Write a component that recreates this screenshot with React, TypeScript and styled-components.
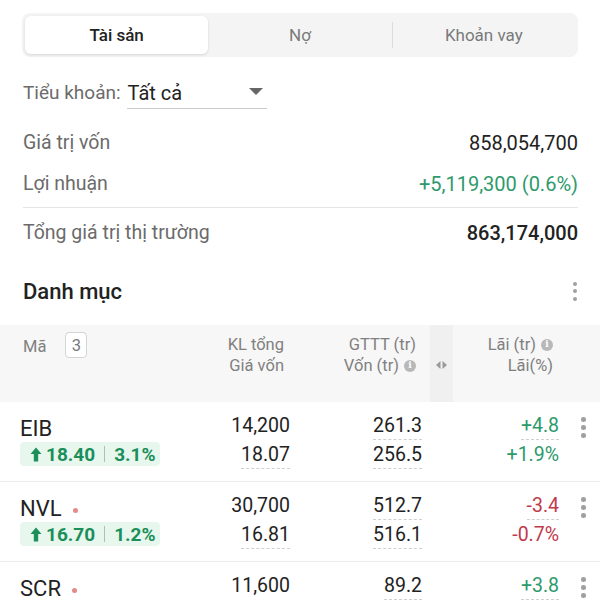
import React from "react";
import styled, { createGlobalStyle } from "styled-components";

const GlobalStyle = createGlobalStyle`
	html, body {
		margin: 0;
		padding: 0;
		background: #ffffff;
	}
	body {
		font-family: Roboto, "Noto Sans", sans-serif;
		color: #222222;
	}
`;

const Page = styled.div`
	width: 600px;
	height: 600px;
	overflow: hidden;
	background: #ffffff;
`;

const Tabs = styled.div`
	margin: 13px 22px 0 22px;
	height: 44px;
	background: #f4f4f4;
	border-radius: 8px;
	padding: 3px;
	box-sizing: border-box;
	display: grid;
	grid-template-columns: 1fr 1fr 1fr;
	align-items: center;
`;

const Tab = styled.div<{ $active?: boolean; $divider?: boolean }>`
	display: flex;
	align-items: center;
	justify-content: center;
	font-size: 17px;
	font-weight: ${(p) => (p.$active ? 500 : 400)};
	color: ${(p) => (p.$active ? "#222222" : "#7a7a7a")};
	background: ${(p) => (p.$active ? "#ffffff" : "transparent")};
	box-shadow: ${(p) => (p.$active ? "0 1px 3px rgba(0,0,0,0.12)" : "none")};
	border-left: ${(p) => (p.$divider ? "1px solid #dddddd" : "none")};
	border-radius: ${(p) => (p.$divider ? "0" : "6px")};
	height: ${(p) => (p.$divider ? "26px" : "38px")};
`;

const SubAccount = styled.div`
	display: flex;
	align-items: center;
	padding: 0 23px;
	margin-top: 18px;
	height: 34px;
`;

const SubLabel = styled.span`
	font-size: 19px;
	color: #6b6b6b;
	margin-right: 6px;
`;

const Select = styled.div`
	width: 140px;
	height: 34px;
	display: flex;
	align-items: center;
	justify-content: space-between;
	border-bottom: 1px solid #cccccc;
	box-sizing: border-box;
	padding: 3px 4px 0 1px;
	font-size: 20px;
	color: #222222;
`;

const Caret = styled.span`
	width: 0;
	height: 0;
	border-left: 7px solid transparent;
	border-right: 7px solid transparent;
	border-top: 7px solid #666666;
	margin-bottom: 3px;
`;

const Summary = styled.div`
	padding: 0 22px 0 23px;
	margin-top: 13px;
`;

const SummaryRow = styled.div<{ $border?: boolean }>`
	display: flex;
	justify-content: space-between;
	align-items: center;
	height: ${(p) => (p.$border ? "50px" : "41px")};
	margin-top: ${(p) => (p.$border ? "3px" : "0")};
	border-top: ${(p) => (p.$border ? "1px solid #e6e6e6" : "none")};
	box-sizing: border-box;
	font-size: 19.5px;
`;

const SummaryLabel = styled.span`
	color: #6b6b6b;
`;

const SummaryValue = styled.span<{ $tone?: "up" | "strong" }>`
	font-size: 20px;
	color: ${(p) => (p.$tone === "up" ? "#2e9a6c" : "#222222")};
	font-weight: ${(p) => (p.$tone === "strong" ? 500 : 400)};
`;

const SectionHead = styled.div`
	display: flex;
	justify-content: space-between;
	align-items: center;
	padding: 0 23px 0 23px;
	margin-top: 19px;
	height: 30px;
`;

const SectionTitle = styled.h2`
	margin: 0;
	font-size: 22px;
	font-weight: 500;
	color: #222222;
`;

const Kebab = styled.span<{ $size?: number }>`
	display: inline-flex;
	flex-direction: column;
	align-items: center;
	gap: 3.5px;
	& > i {
		display: block;
		width: ${(p) => p.$size ?? 4.5}px;
		height: ${(p) => p.$size ?? 4.5}px;
		border-radius: 50%;
		background: #a0a0a0;
	}
`;

const Dots = ({ size }: { size?: number }) => (
	<Kebab $size={size}>
		<i />
		<i />
		<i />
	</Kebab>
);

const grid = `
	display: grid;
	grid-template-columns: 160px 110px 132px 8px 23px 106px 41px;
	padding-left: 20px;
`;

const TableHead = styled.div`
	${grid}
	margin-top: 19px;
	height: 77px;
	background: #f7f7f7;
	font-size: 16.5px;
	color: #808080;
	line-height: 21px;
`;

const HeadCell = styled.div<{ $right?: boolean }>`
	padding-top: 9px;
	padding-right: ${(p) => (p.$right ? "6px" : "0")};
	padding-left: ${(p) => (p.$right ? "0" : "3px")};
	display: flex;
	flex-direction: column;
	align-items: ${(p) => (p.$right ? "flex-end" : "flex-start")};
`;

const HeadLine = styled.span`
	display: inline-flex;
	align-items: center;
	gap: 5px;
	white-space: nowrap;
`;

const CountBadge = styled.span`
	display: inline-flex;
	align-items: center;
	justify-content: center;
	width: 22px;
	height: 26px;
	border: 1px solid #d4d4d4;
	border-radius: 4px;
	box-sizing: border-box;
	margin-left: 14px;
	margin-top: -2px;
	color: #7a7a7a;
	background: #ffffff;
`;

const Info = styled.span`
	display: inline-flex;
	align-items: center;
	justify-content: center;
	width: 12px;
	height: 12px;
	border-radius: 50%;
	background: #b8b8b8;
	color: #ffffff;
	font-size: 9px;
	font-weight: 700;
	font-family: "DejaVu Serif", serif;
	line-height: 1;
`;

const Handle = styled.div`
	background: #f0f0f0;
	display: flex;
	justify-content: center;
	padding-top: 36px;
`;

const Row = styled.div`
	${grid}
	height: 80px;
	border-bottom: 1px solid #ebebeb;
	box-sizing: border-box;
	padding-top: 9px;
`;

const NameCell = styled.div`
	padding-top: 3px;
	display: flex;
	flex-direction: column;
	align-items: flex-start;
`;

const Ticker = styled.div`
	display: flex;
	align-items: center;
	gap: 11px;
	font-size: 22px;
	height: 28px;
	color: #222222;
`;

const RedDot = styled.span`
	width: 5px;
	height: 5px;
	border-radius: 50%;
	background: #e58a8a;
	margin-top: 4px;
`;

const PriceBadge = styled.div`
	display: inline-flex;
	align-items: center;
	height: 24px;
	padding: 0 5px 0 10px;
	background: #e8f7ee;
	border-radius: 4px;
	color: #1a8f5a;
	font-size: 19px;
	font-weight: 700;
	gap: 9px;
`;

const PriceValue = styled.span`
	margin-left: -5px;
`;

const Sep = styled.span`
	width: 1px;
	height: 16px;
	background: #b9b9b9;
`;

const NumCell = styled.div`
	display: flex;
	flex-direction: column;
	align-items: flex-end;
`;

const Num = styled.span<{ $tone?: "up" | "down"; $dashed?: boolean }>`
	height: 29px;
	line-height: 29px;
	font-size: 19.5px;
	box-sizing: border-box;
	color: ${(p) =>
		p.$tone === "up" ? "#2e9a6c" : p.$tone === "down" ? "#bf3a4c" : "#222222"};
	border-bottom: 1px dashed ${(p) => (p.$dashed ? "#cfcfcf" : "transparent")};
`;

const Action = styled.div`
	display: flex;
	padding-top: 6px;
	padding-left: 22px;
`;

const ArrowUp = () => (
	<svg width="12" height="15" viewBox="0 0 12 15">
		<path d="M6 0.5 L11.5 7 H8.2 V14.5 H3.8 V7 H0.5 Z" fill="#1a8f5a" />
	</svg>
);

const ResizeArrows = () => (
	<svg width="11" height="8" viewBox="0 0 11 8">
		<path d="M0 4 L4.5 0 V8 Z M11 4 L6.5 0 V8 Z" fill="#9a9a9a" />
	</svg>
);

type Holding = {
	code: string;
	dot?: boolean;
	price: string;
	pct: string;
	qty: string;
	cost: string;
	market: string;
	capital: string;
	pnl: string;
	pnlPct: string;
	tone: "up" | "down";
};

const holdings: Holding[] = [
	{ code: "EIB", price: "18.40", pct: "3.1%", qty: "14,200", cost: "18.07", market: "261.3", capital: "256.5", pnl: "+4.8", pnlPct: "+1.9%", tone: "up" },
	{ code: "NVL", dot: true, price: "16.70", pct: "1.2%", qty: "30,700", cost: "16.81", market: "512.7", capital: "516.1", pnl: "-3.4", pnlPct: "-0.7%", tone: "down" },
	{ code: "SCR", dot: true, price: "7.69", pct: "0.9%", qty: "11,600", cost: "7.36", market: "89.2", capital: "85.4", pnl: "+3.8", pnlPct: "+4.5%", tone: "up" },
];

export default function App() {
	return (
		<Page>
			<GlobalStyle />
			<Tabs>
				<Tab $active>Tài sản</Tab>
				<Tab>Nợ</Tab>
				<Tab $divider>Khoản vay</Tab>
			</Tabs>

			<SubAccount>
				<SubLabel>Tiểu khoản:</SubLabel>
				<Select>
					<span>Tất cả</span>
					<Caret />
				</Select>
			</SubAccount>

			<Summary>
				<SummaryRow>
					<SummaryLabel>Giá trị vốn</SummaryLabel>
					<SummaryValue>858,054,700</SummaryValue>
				</SummaryRow>
				<SummaryRow>
					<SummaryLabel>Lợi nhuận</SummaryLabel>
					<SummaryValue $tone="up">+5,119,300 (0.6%)</SummaryValue>
				</SummaryRow>
				<SummaryRow $border>
					<SummaryLabel>Tổng giá trị thị trường</SummaryLabel>
					<SummaryValue $tone="strong">863,174,000</SummaryValue>
				</SummaryRow>
			</Summary>

			<SectionHead>
				<SectionTitle>Danh mục</SectionTitle>
				<Dots size={4} />
			</SectionHead>

			<TableHead>
				<HeadCell>
					<HeadLine>
						Mã<CountBadge>3</CountBadge>
					</HeadLine>
				</HeadCell>
				<HeadCell $right>
					<HeadLine>KL tổng</HeadLine>
					<HeadLine>Giá vốn</HeadLine>
				</HeadCell>
				<HeadCell $right>
					<HeadLine>GTTT (tr)</HeadLine>
					<HeadLine>
						Vốn (tr) <Info>i</Info>
					</HeadLine>
				</HeadCell>
				<div />
				<Handle>
					<ResizeArrows />
				</Handle>
				<HeadCell $right>
					<HeadLine>
						Lãi (tr) <Info>i</Info>
					</HeadLine>
					<HeadLine>Lãi(%)</HeadLine>
				</HeadCell>
				<div />
			</TableHead>

			{holdings.map((h) => (
				<Row key={h.code}>
					<NameCell>
						<Ticker>
							{h.code}
							{h.dot && <RedDot />}
						</Ticker>
						<PriceBadge>
							<ArrowUp />
							<PriceValue>{h.price}</PriceValue>
							<Sep />
							{h.pct}
						</PriceBadge>
					</NameCell>
					<NumCell>
						<Num>{h.qty}</Num>
						<Num $dashed>{h.cost}</Num>
					</NumCell>
					<NumCell>
						<Num $dashed>{h.market}</Num>
						<Num $dashed>{h.capital}</Num>
					</NumCell>
					<div />
					<div />
					<NumCell>
						<Num $tone={h.tone} $dashed>
							{h.pnl}
						</Num>
						<Num $tone={h.tone}>{h.pnlPct}</Num>
					</NumCell>
					<Action>
						<Dots />
					</Action>
				</Row>
			))}
		</Page>
	);
}
